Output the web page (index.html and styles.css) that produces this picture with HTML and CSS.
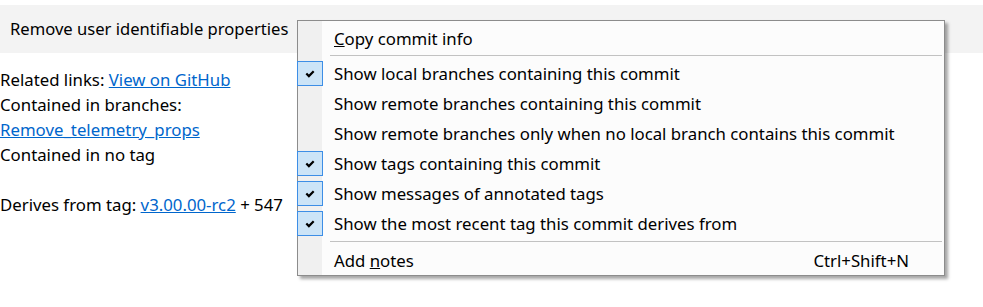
FILE: index.html
```html
<!DOCTYPE html>
<html lang="en">
<head>
    <meta charset="UTF-8">
    <title>Commit info</title>
    <link rel="stylesheet" href="styles.css">
</head>
<body>
    <div class="header">Remove user identifiable properties</div>

    <div class="info">
        <div class="line">Related links: <a href="#">View on GitHub</a></div>
        <div class="line">Contained in branches:</div>
        <div class="line"><a href="#">Remove_telemetry_props</a></div>
        <div class="line">Contained in no tag</div>
        <div class="line blank"></div>
        <div class="line">Derives from tag: <a href="#">v3.00.00-rc2</a> + 547</div>
    </div>

    <div class="menu">
        <div class="item first">
            <span class="mark"></span>
            <span class="label"><u>C</u>opy commit info</span>
        </div>
        <div class="sep"></div>
        <div class="item">
            <span class="mark checked"><svg viewBox="0 0 25 25"><path d="M8.5 12.5l2.8 2.8 5.2-5.2"/></svg></span>
            <span class="label">Show local branches containing this commit</span>
        </div>
        <div class="item">
            <span class="mark"></span>
            <span class="label">Show remote branches containing this commit</span>
        </div>
        <div class="item">
            <span class="mark"></span>
            <span class="label">Show remote branches only when no local branch contains this commit</span>
        </div>
        <div class="item">
            <span class="mark checked"><svg viewBox="0 0 25 25"><path d="M8.5 12.5l2.8 2.8 5.2-5.2"/></svg></span>
            <span class="label">Show tags containing this commit</span>
        </div>
        <div class="item">
            <span class="mark checked"><svg viewBox="0 0 25 25"><path d="M8.5 12.5l2.8 2.8 5.2-5.2"/></svg></span>
            <span class="label">Show messages of annotated tags</span>
        </div>
        <div class="item">
            <span class="mark checked"><svg viewBox="0 0 25 25"><path d="M8.5 12.5l2.8 2.8 5.2-5.2"/></svg></span>
            <span class="label">Show the most recent tag this commit derives from</span>
        </div>
        <div class="sep last"></div>
        <div class="item">
            <span class="mark"></span>
            <span class="label">Add <u>n</u>otes</span>
            <span class="shortcut">Ctrl+Shift+N</span>
        </div>
    </div>
</body>
</html>
```

FILE: styles.css
```css
body {
    margin: 0;
    background: #ffffff;
    color: #000;
    font-family: "Noto Sans", "Open Sans", sans-serif;
    font-size: 16.8px;
}
.header {
    margin-top: 5px;
    height: 48px;
    line-height: 47px;
    padding-left: 10px;
    background: #f3f3f3;
    font-size: 16.6px;
}
.info {
    margin-top: 14px;
}
.line {
    height: 25px;
    line-height: 25px;
    white-space: nowrap;
}
.info a {
    color: #0066cc;
    text-decoration: underline;
}
.menu {
    position: absolute;
    left: 297px;
    top: 20px;
    width: 646px;
    padding: 1px 0 0 0;
    border: 1px solid #8c8c8c;
    background: linear-gradient(to right, #f0f0f0 0, #f0f0f0 24px, #fcfcfc 24px);
    box-shadow: 3px 3px 3px rgba(0, 0, 0, 0.35);
}
.item {
    display: flex;
    align-items: center;
    height: 30px;
}
.item.first {
    height: 32px;
}
.mark {
    box-sizing: border-box;
    width: 26px;
    height: 25px;
    margin-left: -1px;
    flex: none;
}
.mark.checked {
    background: #cce4f7;
    border: 1px solid #3d8ee6;
}
.mark svg {
    display: block;
    width: 24px;
    height: 23px;
}
.mark path {
    fill: none;
    stroke: #000;
    stroke-width: 2.4;
}
.label {
    margin-left: 11px;
    white-space: nowrap;
}
.shortcut {
    margin-left: auto;
    margin-right: 35px;
}
.sep {
    height: 1px;
    margin: 1px 2px 2px 32px;
    background: #c2c2c2;
}
.sep.last {
    margin: 3px 2px 3px 32px;
}
```
